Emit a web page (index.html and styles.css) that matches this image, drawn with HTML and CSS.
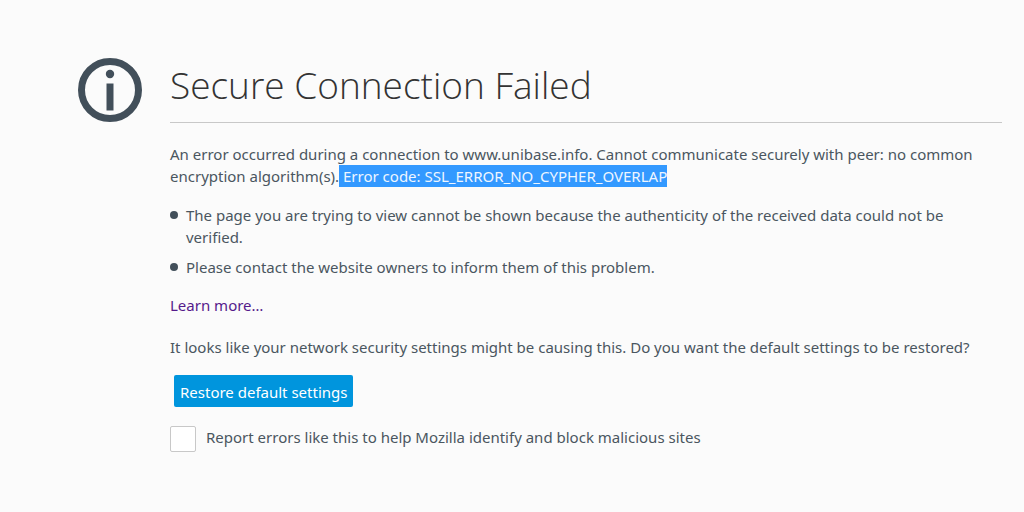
FILE: index.html
```html
<!DOCTYPE html>
<html lang="en">
<head>
    <meta charset="UTF-8">
    <meta name="viewport" content="width=device-width, initial-scale=1.0">
    <title>Secure Connection Failed</title>
    <link rel="stylesheet" href="styles.css">
</head>
<body>

    <main class="container">
        <svg class="info-icon" viewBox="0 0 64 64" aria-hidden="true">
            <circle cx="32" cy="32" r="28.5" fill="none" stroke="#424f5a" stroke-width="7"/>
            <circle cx="32" cy="16" r="4.2" fill="#424f5a"/>
            <path d="M28.500 25.500h7v27h-7z" fill="#424f5a"/>
        </svg>

        <div class="content">
            <h1>Secure Connection Failed</h1>

            <p class="description">An error occurred during a connection to www.unibase.info. Cannot communicate securely with peer: no common encryption algorithm(s).<mark> Error code: SSL_ERROR_NO_CYPHER_OVERLAP</mark></p>

            <ul>
                <li>The page you are trying to view cannot be shown because the authenticity of the received data could not be verified.</li>
                <li>Please contact the website owners to inform them of this problem.</li>
            </ul>

            <p class="learn-more"><a href="#">Learn more…</a></p>

            <p class="restore-text">It looks like your network security settings might be causing this. Do you want the default settings to be restored?</p>
            <button type="button" class="restore-btn">Restore default settings</button>

            <div class="report">
                <input type="checkbox" id="report-errors">
                <label for="report-errors">Report errors like this to help Mozilla identify and block malicious sites</label>
            </div>
        </div>
    </main>

</body>
</html>
```
FILE: styles.css
```css
* {
    margin: 0;
    padding: 0;
    box-sizing: border-box;
}
body {
    background: #fbfbfb;
    color: #4a5660;
    font-family: "Noto Sans", sans-serif;
    font-size: 15px;
    line-height: 22px;
}
.container {
    display: flex;
    gap: 28px;
    padding: 58px 22px 40px 78px;
}
.info-icon {
    flex: none;
    width: 64px;
    height: 64px;
}
.content {
    flex: 1;
}
h1 {
    padding-bottom: 10px;
    border-bottom: 1px solid #c8c8c8;
    color: #333;
    font-family: "Open Sans", sans-serif;
    font-size: 37px;
    font-weight: 300;
    line-height: 54px;
}
.description {
    margin-top: 20px;
}
mark {
    padding: 1px 0;
    background: #3399ff;
    color: #eef6ff;
}
ul {
    margin: 17px 0 16px;
    list-style: none;
}
li {
    display: flex;
    gap: 8px;
}
li::before {
    content: "";
    flex: none;
    width: 8px;
    height: 8px;
    margin-top: 7px;
    border-radius: 50%;
    background: #424f5a;
}
li + li {
    margin-top: 8px;
}
.learn-more a {
    color: #551a8b;
    text-decoration: none;
}
.restore-text {
    margin-top: 20px;
}
.restore-btn {
    display: block;
    height: 32px;
    margin: 17px 4px 19px;
    padding: 1px 6px 0;
    border: none;
    border-radius: 2px;
    background: #0095dd;
    color: #fff;
    font: inherit;
}
.report {
    display: flex;
    gap: 10px;
}
.report input {
    appearance: none;
    width: 26px;
    height: 26px;
    border: 1px solid #c8c8c8;
    border-radius: 2px;
    background: #fff;
}
```
